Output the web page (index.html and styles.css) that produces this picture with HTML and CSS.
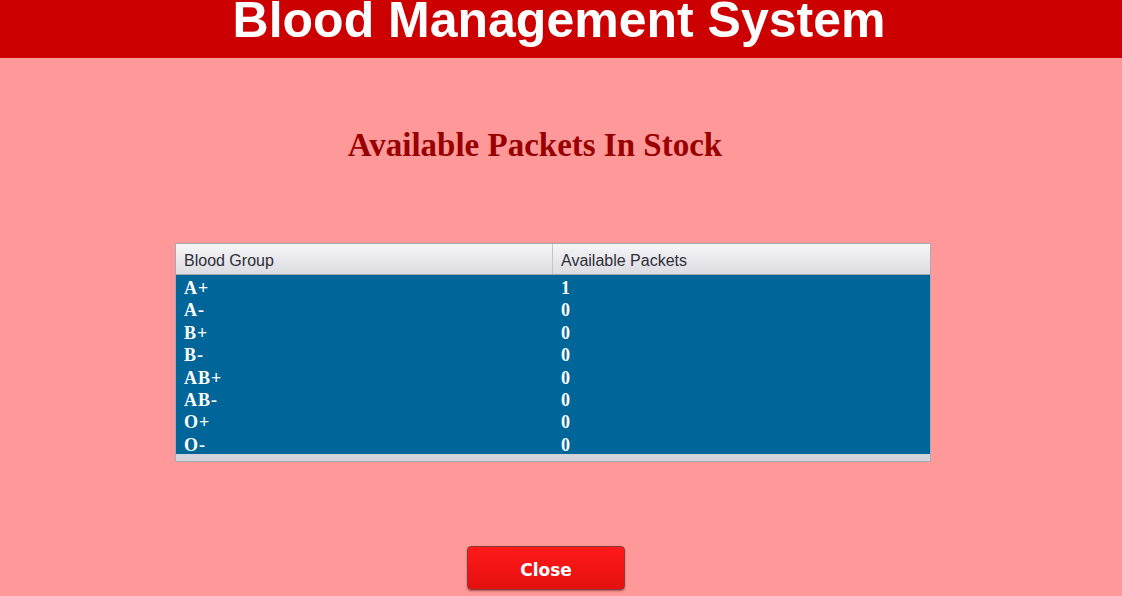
FILE: index.html
```html
<!DOCTYPE html>
<html>
<head>
<meta charset="utf-8">
<link rel="stylesheet" href="styles.css">
</head>
<body>
<header class="topbar"><h1 class="app-title">Blood Management System</h1></header>
<main class="content">
  <h2 class="stock-title">Available Packets In Stock</h2>
  <div class="stock-table">
    <div class="thead">
      <div class="th col-group">Blood Group</div>
      <div class="th col-count">Available Packets</div>
    </div>
    <div class="tbody">
      <div class="tr"><div class="td col-group">A+</div><div class="td col-count">1</div></div>
      <div class="tr"><div class="td col-group">A-</div><div class="td col-count">0</div></div>
      <div class="tr"><div class="td col-group">B+</div><div class="td col-count">0</div></div>
      <div class="tr"><div class="td col-group">B-</div><div class="td col-count">0</div></div>
      <div class="tr"><div class="td col-group">AB+</div><div class="td col-count">0</div></div>
      <div class="tr"><div class="td col-group">AB-</div><div class="td col-count">0</div></div>
      <div class="tr"><div class="td col-group">O+</div><div class="td col-count">0</div></div>
      <div class="tr"><div class="td col-group">O-</div><div class="td col-count">0</div></div>
    </div>
    <div class="tfoot"></div>
  </div>
  <div class="actions"><button class="close-btn">Close</button></div>
</main>
</body>
</html>
```
FILE: styles.css
```css
html, body {
  margin: 0;
  padding: 0;
}
body {
  background: #ff9999;
  width: 1122px;
  height: 596px;
  overflow: hidden;
}
.topbar {
  background: #cc0000;
  height: 58px;
  box-sizing: border-box;
}
.app-title {
  margin: 0;
  font-family: "Liberation Sans", Arial, sans-serif;
  font-weight: bold;
  font-size: 50px;
  line-height: 40px;
  color: #ffffff;
  text-align: center;
  padding-right: 4px;
}
.content {
  display: flex;
  flex-direction: column;
}
.stock-title {
  margin: 69px 0 0 0;
  font-family: "Liberation Serif", "Times New Roman", serif;
  font-weight: bold;
  font-size: 33px;
  line-height: 36px;
  color: #990000;
  text-align: center;
  padding-right: 52px;
}
.stock-table {
  margin: 80px 0 0 175px;
  width: 756px;
  box-sizing: border-box;
  border: 1px solid #a9a9b1;
}
.thead {
  display: flex;
  height: 31px;
  box-sizing: border-box;
  background: linear-gradient(#f6f6f8, #e9e9ed 50%, #dcdce1);
  border-bottom: 1px solid #a6a6ae;
}
.th {
  font-family: "Liberation Sans", Arial, sans-serif;
  font-size: 16px;
  line-height: 30px;
  padding-top: 2px;
  color: #2e2e38;
  box-sizing: border-box;
  padding-left: 8px;
}
.th.col-group {
  width: 377px;
  border-right: 1px solid #c4c4ca;
}
.th.col-count {
  flex: 1;
}
.tbody {
  background: #006699;
}
.tr {
  display: flex;
  height: 22.4px;
}
.td {
  font-family: "Liberation Serif", "Times New Roman", serif;
  font-weight: bold;
  font-size: 18px;
  line-height: 18px;
  padding-top: 4px;
  color: #ffffff;
  letter-spacing: 1px;
  box-sizing: border-box;
  padding-left: 8px;
}
.td.col-group {
  width: 377px;
}
.td.col-count {
  flex: 1;
}
.tfoot {
  height: 7px;
  background: #d3d3db;
}
.actions {
  display: flex;
  justify-content: center;
  margin-top: 84px;
  padding-right: 30px;
}
.close-btn {
  width: 158px;
  height: 44px;
  border: 1px solid #8b3a3a;
  border-radius: 4px;
  background: linear-gradient(#ff1a1a, #f21414 50%, #e41010);
  box-shadow: 0 1px 2px rgba(60, 0, 0, 0.45);
  color: #ffffff;
  font-family: "DejaVu Sans", Verdana, sans-serif;
  font-weight: bold;
  font-size: 17px;
  padding: 3px 0 0 0;
}
```
